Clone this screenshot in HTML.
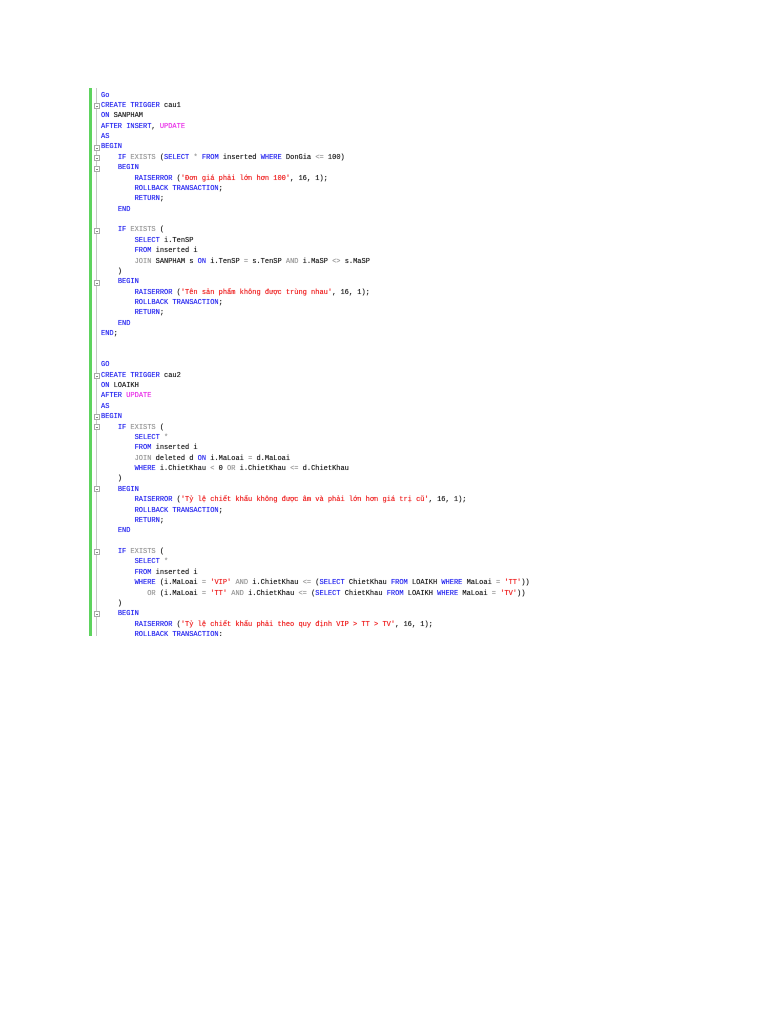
<!DOCTYPE html>
<html><head><meta charset="utf-8"><style>
html,body{margin:0;padding:0;background:#fff;width:768px;height:1024px;overflow:hidden}
#wrap{position:absolute;left:0;top:88px;width:600px;height:548px;overflow:hidden}
#bar{position:absolute;left:89px;top:0;width:3px;height:548px;background:#5ed35e}
#fold{position:absolute;left:96px;top:0;width:1px;height:548px;background:#c8c8c8}
pre{position:absolute;left:101px;top:2.5px;margin:0;font-family:"Liberation Mono","DejaVu Sans Mono",monospace;font-size:7px;line-height:10.37px;color:#222;letter-spacing:0;text-shadow:0 0 0.4px currentColor}
.k{color:#2a2af0}.g{color:#999}.s{color:#ee2020}.m{color:#e830e8}
.box{position:absolute;left:94px;width:4px;height:4px;border:1px solid #aaa;background:#fff}
.box:after{content:"";position:absolute;left:1px;top:2px;width:2px;height:1px;background:#888}
</style></head><body>
<div id="wrap">
<div id="bar"></div><div id="fold"></div>
<div class="box" style="top:15px"></div>
<div class="box" style="top:57px"></div>
<div class="box" style="top:67px"></div>
<div class="box" style="top:78px"></div>
<div class="box" style="top:140px"></div>
<div class="box" style="top:192px"></div>
<div class="box" style="top:285px"></div>
<div class="box" style="top:326px"></div>
<div class="box" style="top:336px"></div>
<div class="box" style="top:398px"></div>
<div class="box" style="top:461px"></div>
<div class="box" style="top:523px"></div>
<pre><span class="k">Go</span>
<span class="k">CREATE TRIGGER</span> cau1
<span class="k">ON</span> SANPHAM
<span class="k">AFTER INSERT</span>, <span class="m">UPDATE</span>
<span class="k">AS</span>
<span class="k">BEGIN</span>
    <span class="k">IF</span> <span class="g">EXISTS</span> (<span class="k">SELECT</span> <span class="g">*</span> <span class="k">FROM</span> inserted <span class="k">WHERE</span> DonGia <span class="g">&lt;=</span> 100)
    <span class="k">BEGIN</span>
        <span class="k">RAISERROR</span> (<span class="s">'Đơn giá phải lớn hơn 100'</span>, 16, 1);
        <span class="k">ROLLBACK TRANSACTION</span>;
        <span class="k">RETURN</span>;
    <span class="k">END</span>

    <span class="k">IF</span> <span class="g">EXISTS</span> (
        <span class="k">SELECT</span> i.TenSP
        <span class="k">FROM</span> inserted i
        <span class="g">JOIN</span> SANPHAM s <span class="k">ON</span> i.TenSP <span class="g">=</span> s.TenSP <span class="g">AND</span> i.MaSP <span class="g">&lt;&gt;</span> s.MaSP
    )
    <span class="k">BEGIN</span>
        <span class="k">RAISERROR</span> (<span class="s">'Tên sản phẩm không được trùng nhau'</span>, 16, 1);
        <span class="k">ROLLBACK TRANSACTION</span>;
        <span class="k">RETURN</span>;
    <span class="k">END</span>
<span class="k">END</span>;


<span class="k">GO</span>
<span class="k">CREATE TRIGGER</span> cau2
<span class="k">ON</span> LOAIKH
<span class="k">AFTER</span> <span class="m">UPDATE</span>
<span class="k">AS</span>
<span class="k">BEGIN</span>
    <span class="k">IF</span> <span class="g">EXISTS</span> (
        <span class="k">SELECT</span> <span class="g">*</span>
        <span class="k">FROM</span> inserted i
        <span class="g">JOIN</span> deleted d <span class="k">ON</span> i.MaLoai <span class="g">=</span> d.MaLoai
        <span class="k">WHERE</span> i.ChietKhau <span class="g">&lt;</span> 0 <span class="g">OR</span> i.ChietKhau <span class="g">&lt;=</span> d.ChietKhau
    )
    <span class="k">BEGIN</span>
        <span class="k">RAISERROR</span> (<span class="s">'Tỷ lệ chiết khấu không được âm và phải lớn hơn giá trị cũ'</span>, 16, 1);
        <span class="k">ROLLBACK TRANSACTION</span>;
        <span class="k">RETURN</span>;
    <span class="k">END</span>

    <span class="k">IF</span> <span class="g">EXISTS</span> (
        <span class="k">SELECT</span> <span class="g">*</span>
        <span class="k">FROM</span> inserted i
        <span class="k">WHERE</span> (i.MaLoai <span class="g">=</span> <span class="s">'VIP'</span> <span class="g">AND</span> i.ChietKhau <span class="g">&lt;=</span> (<span class="k">SELECT</span> ChietKhau <span class="k">FROM</span> LOAIKH <span class="k">WHERE</span> MaLoai <span class="g">=</span> <span class="s">'TT'</span>))
           <span class="g">OR</span> (i.MaLoai <span class="g">=</span> <span class="s">'TT'</span> <span class="g">AND</span> i.ChietKhau <span class="g">&lt;=</span> (<span class="k">SELECT</span> ChietKhau <span class="k">FROM</span> LOAIKH <span class="k">WHERE</span> MaLoai <span class="g">=</span> <span class="s">'TV'</span>))
    )
    <span class="k">BEGIN</span>
        <span class="k">RAISERROR</span> (<span class="s">'Tỷ lệ chiết khấu phải theo quy định VIP &gt; TT &gt; TV'</span>, 16, 1);
        <span class="k">ROLLBACK TRANSACTION</span>;
</pre>
</div>
</body></html>
